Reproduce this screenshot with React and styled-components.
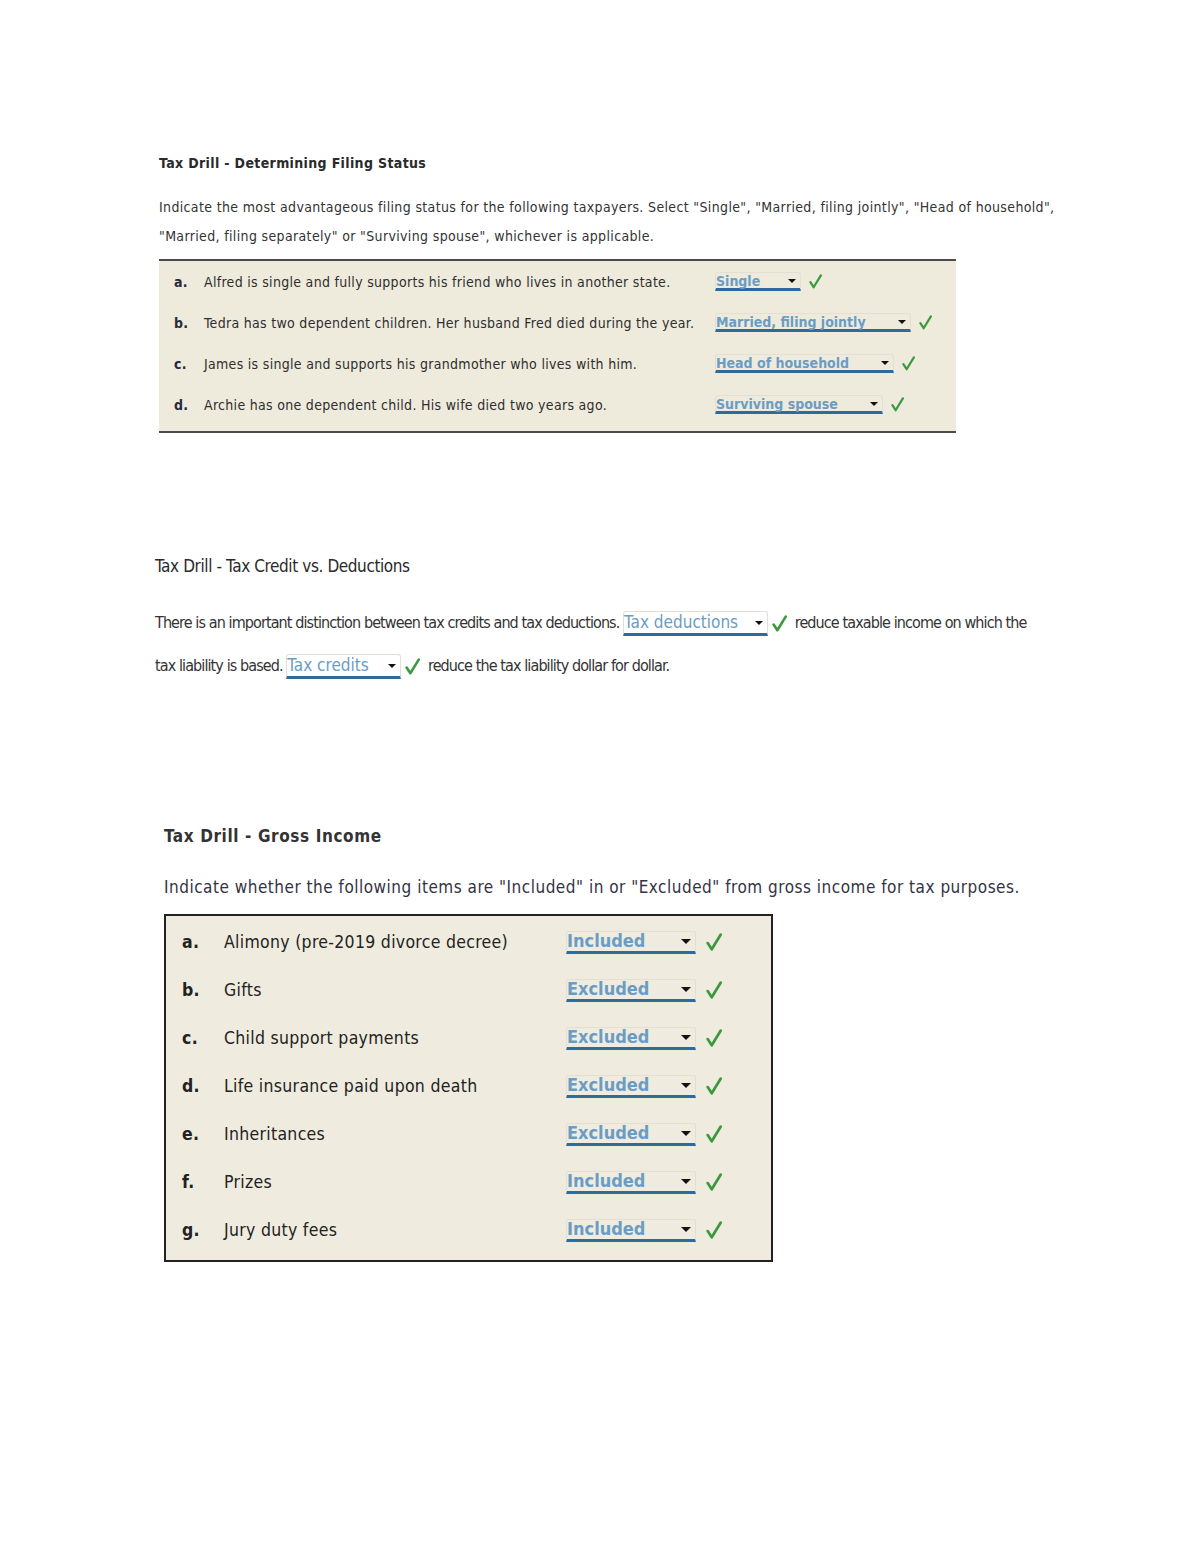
import React from "react";
import styled, { createGlobalStyle } from "styled-components";

const GlobalStyle = createGlobalStyle`
  html, body {
    margin: 0;
    padding: 0;
    background: #ffffff;
  }
  body {
    font-family: "DejaVu Sans Condensed", "DejaVu Sans", sans-serif;
    color: #2b2b2b;
  }
`;

const filingRows = [
  { letter: "a.", text: "Alfred is single and fully supports his friend who lives in another state.", answer: "Single", width: 86 },
  { letter: "b.", text: "Tedra has two dependent children. Her husband Fred died during the year.", answer: "Married, filing jointly", width: 196 },
  { letter: "c.", text: "James is single and supports his grandmother who lives with him.", answer: "Head of household", width: 179 },
  { letter: "d.", text: "Archie has one dependent child. His wife died two years ago.", answer: "Surviving spouse", width: 168 },
];

const incomeRows = [
  { letter: "a.", text: "Alimony (pre-2019 divorce decree)", answer: "Included" },
  { letter: "b.", text: "Gifts", answer: "Excluded" },
  { letter: "c.", text: "Child support payments", answer: "Excluded" },
  { letter: "d.", text: "Life insurance paid upon death", answer: "Excluded" },
  { letter: "e.", text: "Inheritances", answer: "Excluded" },
  { letter: "f.", text: "Prizes", answer: "Included" },
  { letter: "g.", text: "Jury duty fees", answer: "Included" },
];

function Check({ size = 14 }) {
  return (
    <CheckMark width={size} height={size * 1.15} viewBox="0 0 14 16">
      <path d="M1.5 8.8 L5 14.2 L12.8 1.5" fill="none" stroke="#3b9a3e" strokeWidth="2.4" strokeLinecap="round" strokeLinejoin="round" />
    </CheckMark>
  );
}

function Dropdown({ value, width, size }) {
  return (
    <Select $width={width} $size={size}>
      <SelectValue>{value}</SelectValue>
      <Arrow $size={size} />
    </Select>
  );
}

function App() {
  return (
    <Page>
      <GlobalStyle />

      <FilingSection>
        <FilingTitle>Tax Drill - Determining Filing Status</FilingTitle>
        <FilingIntro>
          Indicate the most advantageous filing status for the following taxpayers. Select "Single", "Married, filing jointly", "Head of household",
          <br />
          "Married, filing separately" or "Surviving spouse", whichever is applicable.
        </FilingIntro>
        <FilingTable>
          {filingRows.map((row) => (
            <FilingRow key={row.letter}>
              <FilingLetter>{row.letter}</FilingLetter>
              <FilingText>{row.text}</FilingText>
              <AnswerCell>
                <Dropdown value={row.answer} width={row.width} size="small" />
                <Check size={13} />
              </AnswerCell>
            </FilingRow>
          ))}
        </FilingTable>
      </FilingSection>

      <CreditSection>
        <CreditTitle>Tax Drill - Tax Credit vs. Deductions</CreditTitle>
        <CreditText>
          There is an important distinction between tax credits and tax deductions.{" "}
          <Dropdown value="Tax deductions" width={145} size="medium" />
          <Check size={15} /> reduce taxable income on which the
          <br />
          tax liability is based.{" "}
          <Dropdown value="Tax credits" width={115} size="medium" />
          <Check size={15} /> reduce the tax liability dollar for dollar.
        </CreditText>
      </CreditSection>

      <IncomeSection>
        <IncomeTitle>Tax Drill - Gross Income</IncomeTitle>
        <IncomeIntro>
          Indicate whether the following items are "Included" in or "Excluded" from gross income for tax purposes.
        </IncomeIntro>
        <IncomeTable>
          {incomeRows.map((row) => (
            <IncomeRow key={row.letter}>
              <IncomeLetter>{row.letter}</IncomeLetter>
              <IncomeText>{row.text}</IncomeText>
              <AnswerCell>
                <Dropdown value={row.answer} width={130} size="large" />
                <Check size={16} />
              </AnswerCell>
            </IncomeRow>
          ))}
        </IncomeTable>
      </IncomeSection>
    </Page>
  );
}

export default App;

const Page = styled.div`
  width: 1200px;
  min-height: 1553px;
  padding-top: 153px;
  box-sizing: border-box;
`;

/* ---------- section 1 ---------- */

const FilingSection = styled.section`
  margin-left: 159px;
`;

const FilingTitle = styled.h2`
  margin: 0;
  font-size: 14px;
  line-height: 20px;
  font-weight: bold;
  letter-spacing: 0.35px;
  color: #2a2a2a;
`;

const FilingIntro = styled.p`
  margin: 20px 0 0;
  font-size: 14px;
  line-height: 29px;
  letter-spacing: 0.35px;
  color: #333333;
  white-space: nowrap;
`;

const FilingTable = styled.div`
  margin-top: 8px;
  width: 797px;
  background: #eeebdd;
  border-top: 2px solid #4a4a4a;
  border-bottom: 2px solid #4a4a4a;
  padding: 0 0 6px 15px;
  box-sizing: border-box;
`;

const FilingRow = styled.div`
  display: grid;
  grid-template-columns: 30px 511px auto;
  align-items: center;
  height: 41px;
  font-size: 14px;
  letter-spacing: 0.3px;
  color: #2e2e2e;
`;

const FilingLetter = styled.span`
  font-weight: bold;
  color: #2a2a3a;
`;

const FilingText = styled.span`
  white-space: nowrap;
`;

const AnswerCell = styled.span`
  display: flex;
  align-items: center;
  gap: 8px;
  letter-spacing: 0;
`;

/* ---------- shared select ---------- */

const selectSizes = {
  small: { height: 19, font: 14, weight: "bold", arrow: 4 },
  medium: { height: 25, font: 17, weight: "normal", arrow: 4 },
  large: { height: 23, font: 18, weight: "bold", arrow: 5 },
};

const Select = styled.span`
  display: inline-flex;
  align-items: center;
  justify-content: space-between;
  vertical-align: middle;
  box-sizing: border-box;
  width: ${(p) => p.$width}px;
  height: ${(p) => selectSizes[p.$size].height}px;
  border: 1px solid #e2dfd6;
  border-bottom: 3px solid #2e6b9b;
  border-radius: 3px 3px 0 0;
  padding: 0 4px 0 0;
  font-size: ${(p) => selectSizes[p.$size].font}px;
  font-weight: ${(p) => selectSizes[p.$size].weight};
  letter-spacing: 0;
  color: #6b9cc4;
  line-height: 1;
  background: transparent;
`;

const SelectValue = styled.span`
  white-space: nowrap;
`;

const Arrow = styled.span`
  width: 0;
  height: 0;
  border-left: ${(p) => selectSizes[p.$size].arrow}px solid transparent;
  border-right: ${(p) => selectSizes[p.$size].arrow}px solid transparent;
  border-top: ${(p) => selectSizes[p.$size].arrow}px solid #111111;
`;

const CheckMark = styled.svg`
  display: inline-block;
  vertical-align: middle;
  flex-shrink: 0;
`;

/* ---------- section 2 ---------- */

const CreditSection = styled.section`
  margin: 121px 0 0 155px;
`;

const CreditTitle = styled.h2`
  margin: 0;
  font-size: 17px;
  line-height: 24px;
  font-weight: normal;
  letter-spacing: -0.4px;
  color: #2a2a2a;
`;

const CreditText = styled.p`
  margin: 23px 0 0;
  font-size: 16px;
  line-height: 43px;
  letter-spacing: -0.9px;
  color: #333333;
  white-space: nowrap;

  ${CheckMark} {
    margin: 0 4px 0 4px;
  }
`;

/* ---------- section 3 ---------- */

const IncomeSection = styled.section`
  margin: 138px 0 0 164px;
`;

const IncomeTitle = styled.h2`
  margin: 0;
  font-size: 17px;
  line-height: 22px;
  font-weight: bold;
  letter-spacing: 0.6px;
  color: #333333;
`;

const IncomeIntro = styled.p`
  margin: 28px 0 0;
  font-size: 17px;
  line-height: 24px;
  letter-spacing: 0.5px;
  color: #333344;
  white-space: nowrap;
`;

const IncomeTable = styled.div`
  margin-top: 15px;
  width: 609px;
  height: 348px;
  box-sizing: border-box;
  background: #efecdf;
  border: 2px solid #222222;
  padding: 2px 0 0 16px;
`;

const IncomeRow = styled.div`
  display: grid;
  grid-template-columns: 42px 342px auto;
  align-items: center;
  height: 48px;
  font-size: 17.5px;
  letter-spacing: 0.3px;
  color: #222222;

  ${AnswerCell} {
    gap: 10px;
  }
`;

const IncomeLetter = styled.span`
  font-weight: bold;
`;

const IncomeText = styled.span`
  white-space: nowrap;
`;
